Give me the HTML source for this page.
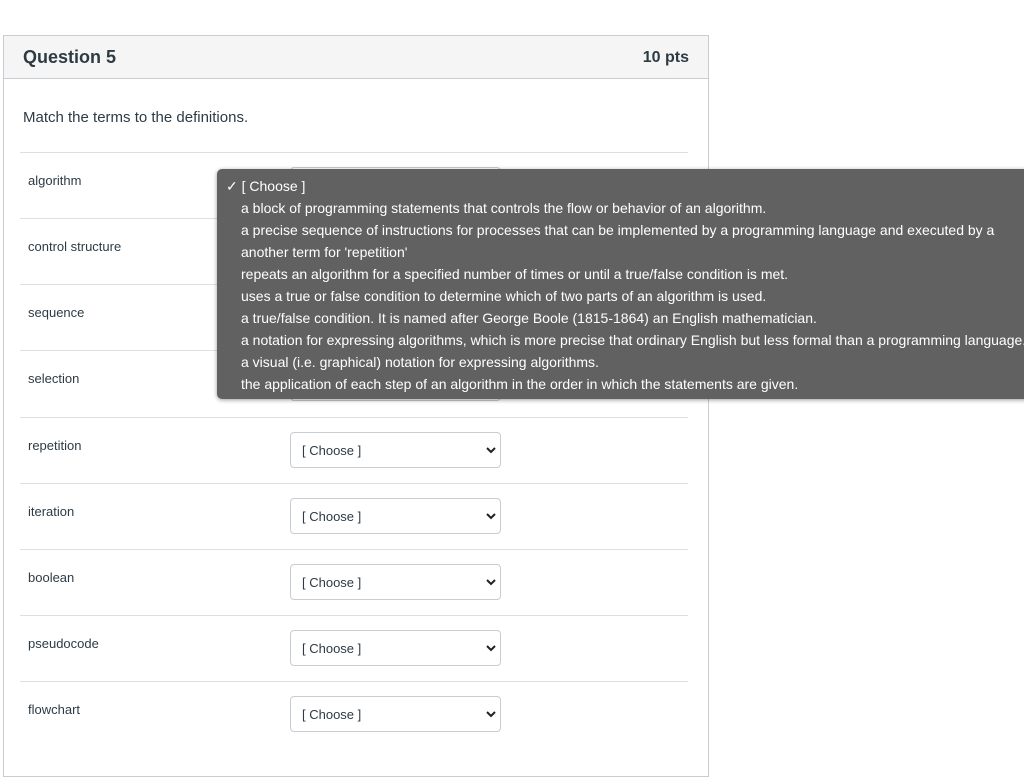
<!DOCTYPE html>
<html><head><style>
body{margin:0;width:1024px;height:763px;background:#fff;font-family:"Liberation Sans",sans-serif;position:relative;overflow:hidden;color:#2d3b45}
.card{position:absolute;left:3px;top:35px;width:704px;height:740px;border:1px solid #c7cdd1}
.hdr{height:42px;background:#f5f5f5;border-bottom:1px solid #c7cdd1;position:relative}
.hdr .t{position:absolute;left:19px;top:11px;font-size:18px;font-weight:bold;color:#2d3b45}
.hdr .p{position:absolute;right:19px;top:13px;font-size:16px;font-weight:bold;color:#2d3b45}
.q{position:absolute;left:19px;top:73px;font-size:15px}
.row{position:absolute;left:24px;width:664px;height:66px;border-top:1px solid #dde0e3}
.row .n{position:absolute;left:4px;top:20px;font-size:13px}
.sel{position:absolute;left:266px;top:14px;width:209px;height:34px;border:1px solid #c7cdd1;border-radius:4px;background:#fff}
.sel span{position:absolute;left:11px;top:10px;font-size:13px}
.sel svg{position:absolute;right:4px;top:13px}
.pop{position:absolute;left:217px;top:169px;width:820px;height:230px;background:#616161;border-radius:5px;box-shadow:0 1px 4px rgba(0,0,0,.4);color:#fff;font-size:14px}
.pop div{position:absolute;left:24px;white-space:nowrap}
</style></head><body>
<div class="card">
<div class="hdr"><span class="t">Question 5</span><span class="p">10 pts</span></div>
<div class="q">Match the terms to the definitions.</div>
</div>
<div class="row" style="top:152px;left:20px;width:668px"><span class="n" style="left:8px">algorithm</span><div class="sel" style="left:270px"><span>[ Choose ]</span></div></div>
<div class="row" style="top:218px;left:20px;width:668px"><span class="n" style="left:8px">control structure</span></div>
<div class="row" style="top:284px;left:20px;width:668px"><span class="n" style="left:8px">sequence</span></div>
<div class="row" style="top:350px;left:20px;width:668px"><span class="n" style="left:8px">selection</span><div class="sel" style="left:270px"><span>[ Choose ]</span></div></div>
<div class="row" style="top:417px;left:20px;width:668px"><span class="n" style="left:8px">repetition</span><div class="sel" style="left:270px"><span>[ Choose ]</span><svg width="10" height="8" viewBox="0 0 10 8"><path d="M1 2l4 4 4-4" stroke="#222" stroke-width="2" fill="none"/></svg></div></div>
<div class="row" style="top:483px;left:20px;width:668px"><span class="n" style="left:8px">iteration</span><div class="sel" style="left:270px"><span>[ Choose ]</span><svg width="10" height="8" viewBox="0 0 10 8"><path d="M1 2l4 4 4-4" stroke="#222" stroke-width="2" fill="none"/></svg></div></div>
<div class="row" style="top:549px;left:20px;width:668px"><span class="n" style="left:8px">boolean</span><div class="sel" style="left:270px"><span>[ Choose ]</span><svg width="10" height="8" viewBox="0 0 10 8"><path d="M1 2l4 4 4-4" stroke="#222" stroke-width="2" fill="none"/></svg></div></div>
<div class="row" style="top:615px;left:20px;width:668px"><span class="n" style="left:8px">pseudocode</span><div class="sel" style="left:270px"><span>[ Choose ]</span><svg width="10" height="8" viewBox="0 0 10 8"><path d="M1 2l4 4 4-4" stroke="#222" stroke-width="2" fill="none"/></svg></div></div>
<div class="row" style="top:681px;left:20px;width:668px"><span class="n" style="left:8px">flowchart</span><div class="sel" style="left:270px"><span>[ Choose ]</span><svg width="10" height="8" viewBox="0 0 10 8"><path d="M1 2l4 4 4-4" stroke="#222" stroke-width="2" fill="none"/></svg></div></div>
<div class="pop">
<div style="left:9px;top:9px">✓ [ Choose ]</div>
<div style="top:31px">a block of programming statements that controls the flow or behavior of an algorithm.</div>
<div style="top:53px">a precise sequence of instructions for processes that can be implemented by a programming language and executed by a</div>
<div style="top:75px">another term for 'repetition'</div>
<div style="top:97px">repeats an algorithm for a specified number of times or until a true/false condition is met.</div>
<div style="top:119px">uses a true or false condition to determine which of two parts of an algorithm is used.</div>
<div style="top:141px">a true/false condition. It is named after George Boole (1815-1864) an English mathematician.</div>
<div style="top:163px">a notation for expressing algorithms, which is more precise that ordinary English but less formal than a programming language.</div>
<div style="top:185px">a visual (i.e. graphical) notation for expressing algorithms.</div>
<div style="top:207px">the application of each step of an algorithm in the order in which the statements are given.</div>
</div>
</body></html>
